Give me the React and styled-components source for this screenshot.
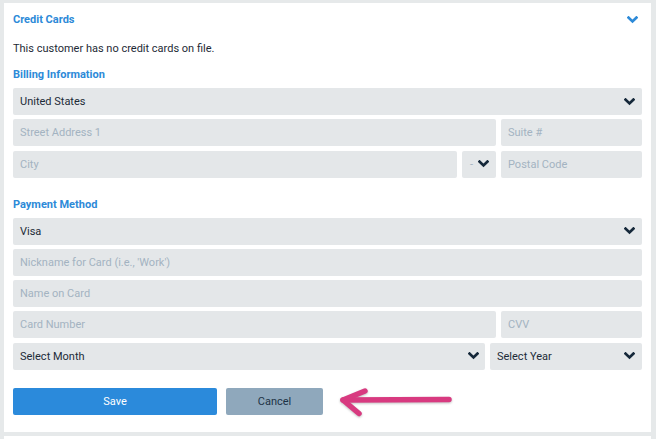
import React from "react";
import styled, { createGlobalStyle } from "styled-components";

const Global = createGlobalStyle`
  html, body { margin: 0; padding: 0; background: #e6e9ea; }
  body { font-family: Roboto, "Liberation Sans", Arial, sans-serif; width: 656px; height: 439px; overflow: hidden; }
  * { box-sizing: border-box; }
`;

const Panel = styled.section`
  background: #ffffff;
  margin: 3px 5px 0 4px;
  padding: 0 9px 17px 9px;
`;

const NextPanel = styled.div`
  background: #ffffff;
  margin: 4px 5px 0 4px;
  height: 3px;
`;

const Header = styled.div`
  height: 33px;
  padding-top: 1px;
  display: flex;
  align-items: center;
  justify-content: space-between;
  padding-right: 4px;
`;

const Title = styled.h3`
  margin: ${(p) => p.$mt || 0}px 0 ${(p) => p.$mb || 0}px 0;
  font-size: 11px;
  line-height: 14px;
  font-weight: 700;
  color: #2d8ad8;
`;

const Message = styled.p`
  margin: 6px 0 0 0;
  font-size: 11px;
  line-height: 14px;
  color: #1e2a36;
`;

const Rows = styled.div`
  display: flex;
  flex-direction: column;
  gap: 4.3px;
`;

const Row = styled.div`
  display: flex;
  gap: 5px;
`;

const Field = styled.div`
  flex: ${(p) => (p.$w ? `0 0 ${p.$w}px` : "1 1 auto")};
  height: 27px;
  background: #e4e7e9;
  border-radius: 2px;
  display: flex;
  align-items: center;
  padding: 0 ${(p) => p.$pr || 7}px 0 7px;
  font-size: 11px;
  color: ${(p) => (p.$ph ? "#a3b3c1" : "#1d2b38")};
  justify-content: space-between;
`;

const Dash = styled.span`
  color: #a3b3c1;
  margin-left: 1px;
`;

const Buttons = styled.div`
  display: flex;
  align-items: flex-start;
  height: 27px;
  margin-top: 18px;
`;

const Button = styled.button`
  width: ${(p) => p.$w}px;
  height: 27px;
  border: none;
  border-radius: 2px;
  margin-right: ${(p) => p.$mr || 0}px;
  background: ${(p) => (p.$primary ? "#2b8adb" : "#8fa8bc")};
  color: ${(p) => (p.$primary ? "#ffffff" : "#1d3346")};
  font-family: inherit;
  font-size: 11px;
  padding: 0;
`;

const ArrowSvg = styled.svg`
  margin-left: 16px;
  flex: 0 0 auto;
  filter: drop-shadow(0px 1px 1px rgba(0, 0, 0, 0.25));
`;

const Chevron = ({ color = "#15283a" }) => (
  <svg width="11" height="8" viewBox="0 0 11 8">
    <polyline
      points="1.6,1.6 5.5,5.4 9.4,1.6"
      fill="none"
      stroke={color}
      strokeWidth="2.7"
      strokeLinecap="square"
      strokeLinejoin="miter"
    />
  </svg>
);

const Select = ({ children, w, pr }) => (
  <Field $w={w} $pr={pr}>
    <span>{children}</span>
    <Chevron />
  </Field>
);

export default function App() {
  return (
    <>
      <Global />
      <Panel>
        <Header>
          <Title>Credit Cards</Title>
          <Chevron color="#2d8ad8" />
        </Header>
        <Message>This customer has no credit cards on file.</Message>
        <Title $mt={12} $mb={6}>Billing Information</Title>
        <Rows>
          <Select>United States</Select>
          <Row>
            <Field $ph>Street Address 1</Field>
            <Field $ph $w={141}>Suite #</Field>
          </Row>
          <Row>
            <Field $ph>City</Field>
            <Field $w={34} $pr={7}>
              <Dash>-</Dash>
              <Chevron />
            </Field>
            <Field $ph $w={141}>Postal Code</Field>
          </Row>
        </Rows>
        <Title $mt={20} $mb={6}>Payment Method</Title>
        <Rows>
          <Select>Visa</Select>
          <Field $ph>Nickname for Card (i.e., 'Work')</Field>
          <Field $ph>Name on Card</Field>
          <Row>
            <Field $ph>Card Number</Field>
            <Field $ph $w={141}>CVV</Field>
          </Row>
          <Row>
            <Select pr={6}>Select Month</Select>
            <Select w={152}>Select Year</Select>
          </Row>
        </Rows>
        <Buttons>
          <Button $primary $w={204} $mr={9}>Save</Button>
          <Button $w={97}>Cancel</Button>
          <ArrowSvg width="114" height="29" viewBox="0 0 114 29">
            <g fill="none" stroke="#d83a80" strokeWidth="5.5" strokeLinecap="round" strokeLinejoin="round">
              <path d="M4 12 L110 11.5" />
              <path d="M26 3 L4 12 L20 25.5" />
            </g>
          </ArrowSvg>
        </Buttons>
      </Panel>
      <NextPanel />
    </>
  );
}
